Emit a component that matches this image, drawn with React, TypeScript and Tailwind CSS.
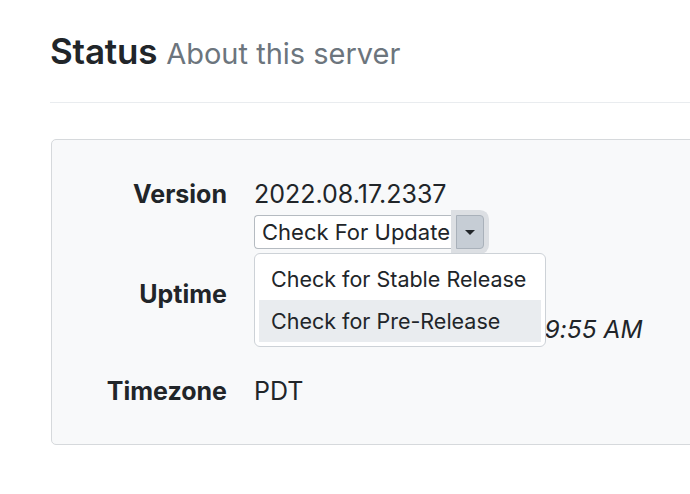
import { FC } from "react";

const rows = [
    { label: "Timezone", value: "PDT" },
];

const App: FC = () => {
    return (
        <div className="w-[690px] h-[494px] overflow-hidden bg-white text-[#212529] font-['Inter',sans-serif]">
            <div className="w-[900px] pl-[50px] pt-[29px]">
                <h1 className="flex items-baseline gap-[9px] pb-[26px] border-b border-[#e9ecef] leading-[44px]">
                    <span className="text-[35px] font-semibold tracking-[-0.2px]">Status</span>
                    <span className="text-[29px] font-normal text-[#6c757d]">About this server</span>
                </h1>

                <div className="mt-[36px] ml-px h-[306px] rounded-[5px] border border-[#d6d9dc] bg-[#f8f9fa] pt-[39px]">
                    <div className="grid grid-cols-[175px_1fr] gap-x-[27px] text-[25px] leading-[30px]">
                        {/* version */}
                        <div className="text-right font-bold">Version</div>
                        <div>
                            <div>2022.08.17.2337</div>
                            <div className="relative mt-[6px] inline-flex h-[34px]">
                                <button className="h-full rounded-l-[4px] border border-r-0 border-[#b5bbc1] bg-white pl-[7px] pr-[6px] text-[22px] leading-[32px]">
                                    Check For Update
                                </button>
                                <button className="relative z-10 flex h-full w-[28px] items-center justify-center rounded-r-[4px] border border-[#a9b1ba] bg-[#c6cdd5] shadow-[0_0_0_5px_#dcdfe3]">
                                    <span className="block h-0 w-0 border-x-[5.5px] border-t-[5.5px] border-x-transparent border-t-[#212529]" />
                                </button>

                                <div className="absolute left-0 top-[38px] z-20 w-[292px] rounded-[6px] border border-[#cdd2d7] bg-white p-[4px] text-[21.5px] whitespace-nowrap">
                                    <div className="h-[42px] px-[12px] leading-[42px]">Check for Stable Release</div>
                                    <div className="h-[42px] bg-[#e9ecef] px-[12px] leading-[42px]">Check for Pre-Release</div>
                                </div>
                            </div>
                        </div>

                        {/* uptime */}
                        <div className="mt-[30px] text-right font-bold">Uptime</div>
                        <div className="mt-[30px] italic whitespace-nowrap">
                            <div>4 days, 22 hours</div>
                            <div className="mt-[5px] text-[24.5px] tracking-[0.05px]">Since Aug 17, 2022 at 1:49:55 AM</div>
                        </div>

                        {rows.map((r) => (
                            <div key={r.label} className="contents">
                                <div className="mt-[32px] text-right font-bold">{r.label}</div>
                                <div className="mt-[32px]">{r.value}</div>
                            </div>
                        ))}
                    </div>
                </div>
            </div>
        </div>
    );
};

export default App;
